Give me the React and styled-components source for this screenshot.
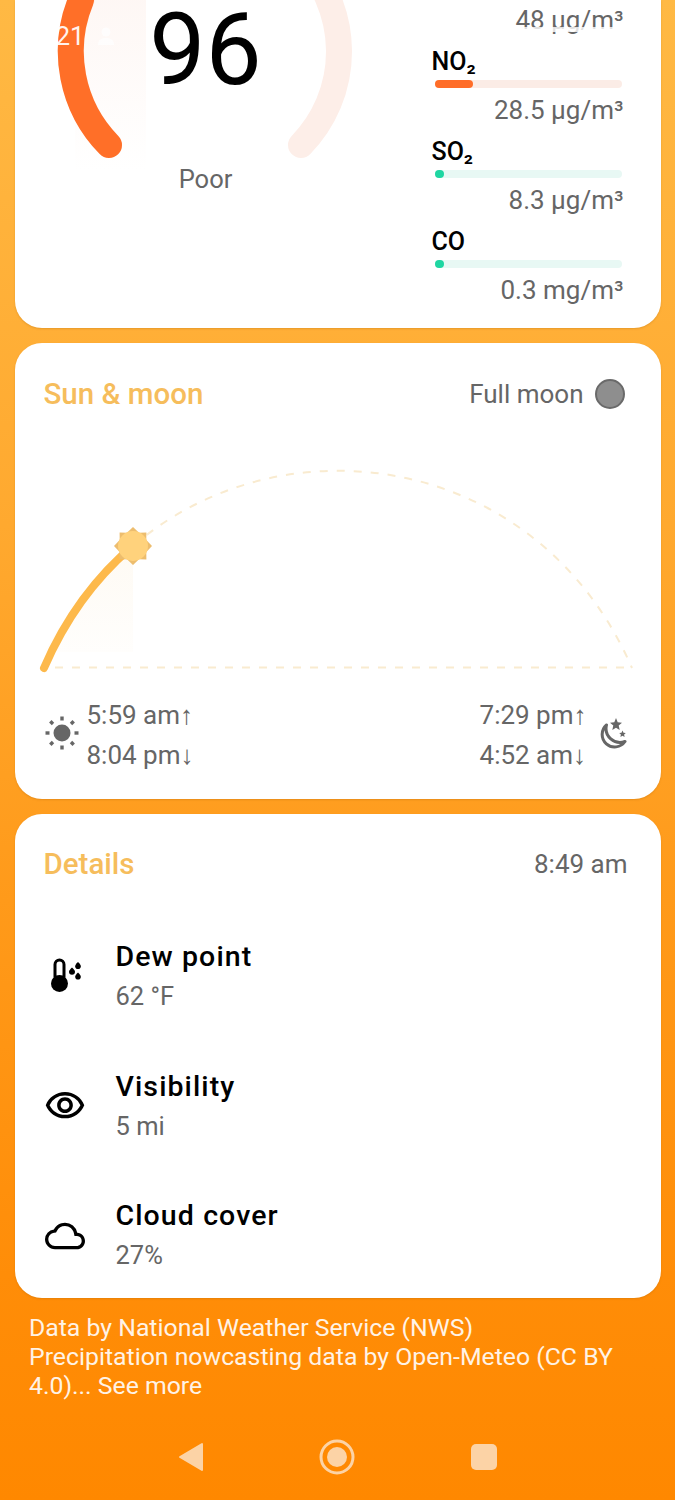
import React from 'react';
import styled, { createGlobalStyle } from 'styled-components';
import { MdOutlineVisibility, MdOutlineCloud } from 'react-icons/md';

const GlobalStyle = createGlobalStyle`
  html, body {
    margin: 0;
    padding: 0;
    background: #ff8800;
  }
  body {
    font-family: Roboto, "Liberation Sans", sans-serif;
  }
`;

const Screen = styled.div`
  position: relative;
  width: 675px;
  height: 1500px;
  overflow: hidden;
  box-sizing: border-box;
  padding: 0 14.5px;
  display: flex;
  flex-direction: column;
  gap: 15px;
  background: linear-gradient(180deg, #ffb944 0%, #ffa92f 35%, #ff9a1a 60%, #ff8d08 85%, #ff8800 100%);
`;

const Card = styled.section`
  background: #fff;
  width: 646px;
  box-sizing: border-box;
  border-radius: ${props => (props.$cropped ? '0 0 27px 27px' : '27px')};
  height: ${props => props.$height}px;
  flex: none;
  position: relative;
  box-shadow: 0 1px 2px rgba(160, 90, 0, 0.25);
`;

const AirCard = styled(Card)`
  display: flex;
  justify-content: space-between;
  overflow: hidden;
`;

const GaugeColumn = styled.div`
  position: relative;
  width: 382px;
  height: 200px;
`;

const GaugeValue = styled.div`
  position: absolute;
  top: 0;
  left: 0;
  width: 382px;
  text-align: center;
  font-size: 100px;
  line-height: 100px;
  color: #000;
`;

const GaugeCaption = styled.div`
  position: absolute;
  top: 164px;
  left: 0;
  width: 382px;
  text-align: center;
  font-size: 25.5px;
  line-height: 30px;
  color: #666;
`;

const StatusClock = styled.div`
  position: absolute;
  top: 21px;
  left: 41px;
  font-size: 26px;
  line-height: 30px;
  color: #fff;
  opacity: 0.92;
`;

const StatusIcon = styled.svg`
  position: absolute;
  top: 26px;
  left: 82px;
  opacity: 0.8;
`;

const StatusFade = styled.div`
  position: absolute;
  top: 27px;
  right: 30px;
  width: 118px;
  height: 5px;
  background: rgba(255, 255, 255, 0.8);
`;

const Pollutants = styled.div`
  box-sizing: border-box;
  width: 229px;
  padding: 6px 37px 0 0;
  flex: none;
`;

const Pollutant = styled.div`
  margin-bottom: 13px;
`;

const PollutantName = styled.div`
  font-size: 25px;
  line-height: 30px;
  font-weight: 500;
  color: #000;
`;

const Track = styled.div`
  height: 8px;
  margin: 3px 0 8px 3px;
  width: 187px;
  border-radius: 4px;
  background: ${props => props.$color};
`;

const Fill = styled.div`
  height: 8px;
  border-radius: 4px;
  background: ${props => props.$color};
`;

const PollutantValue = styled.div`
  font-size: 26px;
  line-height: 28px;
  color: #666;
  text-align: right;
  white-space: nowrap;
`;

const CardHeader = styled.header`
  display: flex;
  align-items: center;
  justify-content: space-between;
  padding: ${props => props.$pad};
  height: 32px;
`;

const CardTitle = styled.h2`
  margin: 0;
  font-size: 29.5px;
  line-height: 32px;
  font-weight: 500;
  color: #f6bd5c;
`;

const HeaderInfo = styled.div`
  display: flex;
  align-items: center;
  gap: 11px;
  font-size: 26px;
  line-height: 32px;
  color: #666;
`;

const MoonDisc = styled.span`
  box-sizing: border-box;
  width: 30px;
  height: 30px;
  border-radius: 50%;
  background: #8e8e8e;
  border: 2px solid #6a6a6a;
`;

const ArcChart = styled.svg`
  display: block;
  margin-top: 20px;
`;

const TimesRow = styled.div`
  display: flex;
  justify-content: space-between;
  padding: 5px 33px 0 29px;
`;

const TimeGroup = styled.div`
  display: flex;
  align-items: center;
  gap: ${props => props.$gap}px;
`;

const TimeIcon = styled.div`
  display: flex;
  margin-bottom: 4px;
`;

const TimeLines = styled.div`
  font-size: 26px;
  line-height: 40px;
  color: #666;
`;

const DetailList = styled.div`
  margin-top: 32px;
`;

const DetailRow = styled.div`
  display: flex;
  align-items: center;
  height: 129.5px;
  padding-left: 29px;
  box-sizing: border-box;
`;

const DetailIcon = styled.div`
  width: 42px;
  height: 42px;
  margin-right: 30px;
  display: flex;
  align-items: center;
  justify-content: center;
  color: #000;
  font-size: ${props => props.$size || 42}px;
`;

const DetailName = styled.div`
  font-size: 28.5px;
  line-height: 36px;
  font-weight: 500;
  letter-spacing: 1.1px;
  color: #000;
`;

const DetailValue = styled.div`
  font-size: 25.5px;
  line-height: 36px;
  margin-top: 3px;
  color: #666;
`;

const Credits = styled.p`
  margin: 0;
  padding: 0 14.5px;
  font-size: 24.8px;
  line-height: 29px;
  color: #fff;
  opacity: 0.9;
`;

const NavBar = styled.nav`
  position: absolute;
  left: 0;
  right: 0;
  bottom: 14px;
  height: 58px;
  display: flex;
  align-items: center;
  justify-content: center;
  gap: 115px;
`;

const POLLUTANTS = [
  { name: 'NO₂', value: '28.5 µg/m³', color: '#ff6d28', track: '#fbece6', width: 38 },
  { name: 'SO₂', value: '8.3 µg/m³', color: '#1fd6a2', track: '#e8f8f4', width: 9 },
  { name: 'CO', value: '0.3 mg/m³', color: '#1fd6a2', track: '#e8f8f4', width: 9 },
];

const Gauge = () => (
  <svg width="382" height="200" viewBox="0 0 382 200" style={{ position: 'absolute', top: 0, left: 0 }}>
    <defs>
      <linearGradient id="gaugeGlow" x1="0" y1="0" x2="0" y2="1">
        <stop offset="0" stopColor="#fdeee8" stopOpacity="0.45" />
        <stop offset="1" stopColor="#fdeee8" stopOpacity="0" />
      </linearGradient>
    </defs>
    <rect x="60" y="0" width="71" height="170" fill="url(#gaugeGlow)" />
    <path d="M94 145 A134 134 0 1 1 286 145" fill="none" stroke="#fdeee8" strokeWidth="26" strokeLinecap="round" />
    <path d="M94 145 A134 134 0 0 1 66 0" fill="none" stroke="#ff6f28" strokeWidth="26" strokeLinecap="round" />
  </svg>
);

const ArcGraph = () => (
  <ArcChart width="646" height="260" viewBox="0 0 646 260">
    <defs>
      <clipPath id="passed">
        <rect x="0" y="0" width="118" height="260" />
      </clipPath>
      <linearGradient id="arcGlow" x1="0" y1="0" x2="0" y2="1">
        <stop offset="0" stopColor="#fdf3e2" stopOpacity="0.4" />
        <stop offset="1" stopColor="#fdf3e2" stopOpacity="0.1" />
      </linearGradient>
    </defs>
    <path
      d="M29 238 C143 -25 503 -25 617 238"
      fill="none"
      stroke="#f9ebd0"
      strokeWidth="2"
      strokeDasharray="8 9"
    />
    <line x1="40" y1="237.5" x2="617" y2="237.5" stroke="#f9ebd0" strokeWidth="2" strokeDasharray="8 9" />
    <path d="M29 222 C60 170 85 140 118 116 L118 222 Z" fill="url(#arcGlow)" />
    <path
      d="M29 238 C143 -25 503 -25 617 238"
      fill="none"
      stroke="#fdb94b"
      strokeWidth="8"
      strokeLinecap="round"
      clipPath="url(#passed)"
    />
    <polygon
      points="118,97 124,102.7 131.4,102.6 131.3,110 137,116 131.3,122 131.4,129.4 124,129.3 118,135 112,129.3 104.6,129.4 104.7,122 99,116 104.7,110 104.6,102.6 112,102.7"
      fill="#edbd6e"
    />
    <circle cx="118" cy="116" r="15" fill="#ffd27c" />
  </ArcChart>
);

const SunIcon = () => (
  <svg width="36" height="36" viewBox="0 0 36 36">
    <circle cx="18" cy="18" r="8.5" fill="#666" />
    <g stroke="#666" strokeWidth="3.4">
      <line x1="18" y1="1.5" x2="18" y2="5.5" />
      <line x1="18" y1="30.5" x2="18" y2="34.5" />
      <line x1="1.5" y1="18" x2="5.5" y2="18" />
      <line x1="30.5" y1="18" x2="34.5" y2="18" />
      <line x1="6.3" y1="6.3" x2="9" y2="9" />
      <line x1="27" y1="27" x2="29.7" y2="29.7" />
      <line x1="6.3" y1="29.7" x2="9" y2="27" />
      <line x1="27" y1="9" x2="29.7" y2="6.3" />
    </g>
  </svg>
);

const MoonStarsIcon = () => (
  <svg width="32" height="32" viewBox="0 0 32 32">
    <path
      d="M10.500 8 A12.500 12.500 0 1 0 29 24.500 A14 14 0 0 1 10.500 8 Z"
      fill="none"
      stroke="#666"
      strokeWidth="3"
      strokeLinejoin="round"
    />
    <polygon points="20,1 21.700,5.300 26,5.700 22.700,8.600 23.700,13 20,10.700 16.300,13 17.300,8.600 14,5.700 18.300,5.300" fill="#666" />
    <polygon points="26.500,13.500 27.500,15.700 29.800,16 28.100,17.600 28.600,20 26.500,18.800 24.400,20 24.900,17.600 23.200,16 25.500,15.700" fill="#666" />
  </svg>
);

const DewIcon = () => (
  <svg width="42" height="42" viewBox="0 0 42 42">
    <path d="M11 21 V8.500 a4.500 4.500 0 0 1 9 0 V21" fill="none" stroke="#000" strokeWidth="3" />
    <circle cx="15.500" cy="27.500" r="8.500" fill="#000" />
    <path d="M28 11.500 c2 2 3 3 3 4.300 a3 3 0 0 1 -6 0 c0 -1.300 1 -2.300 3 -4.300 Z" fill="#000" />
    <path d="M34 6 c2 2 2.800 3 2.800 4.200 a2.800 2.800 0 0 1 -5.600 0 c0 -1.200 .8 -2.200 2.800 -4.200 Z" fill="#000" />
    <path d="M34 16.500 c2 2 2.800 3 2.800 4.200 a2.800 2.800 0 0 1 -5.600 0 c0 -1.200 .8 -2.200 2.800 -4.200 Z" fill="#000" />
  </svg>
);

const App = () => (
  <Screen>
    <GlobalStyle />
    <AirCard $cropped $height={328}>
      <GaugeColumn>
        <Gauge />
        <GaugeValue>96</GaugeValue>
        <GaugeCaption>Poor</GaugeCaption>
        <StatusClock>21</StatusClock>
        <StatusIcon width="18" height="20" viewBox="0 0 18 20">
          <circle cx="9" cy="6" r="4.500" fill="#fff" />
          <path d="M1 19 c0 -5 3 -7 8 -7 s8 2 8 7 Z" fill="#fff" />
        </StatusIcon>
      </GaugeColumn>
      <Pollutants>
        <Pollutant>
          <PollutantValue>48 µg/m³</PollutantValue>
        </Pollutant>
        {POLLUTANTS.map(item => (
          <Pollutant key={item.name}>
            <PollutantName>{item.name}</PollutantName>
            <Track $color={item.track}>
              <Fill $color={item.color} style={{ width: item.width }} />
            </Track>
            <PollutantValue>{item.value}</PollutantValue>
          </Pollutant>
        ))}
      </Pollutants>
      <StatusFade />
    </AirCard>

    <Card $height={456}>
      <CardHeader $pad="35px 36px 0 29px">
        <CardTitle>Sun &amp; moon</CardTitle>
        <HeaderInfo>
          Full moon
          <MoonDisc />
        </HeaderInfo>
      </CardHeader>
      <ArcGraph />
      <TimesRow>
        <TimeGroup $gap={7}>
          <TimeIcon>
            <SunIcon />
          </TimeIcon>
          <TimeLines>
            5:59 am↑
            <br />
            8:04 pm↓
          </TimeLines>
        </TimeGroup>
        <TimeGroup $gap={9}>
          <TimeLines>
            7:29 pm↑
            <br />
            4:52 am↓
          </TimeLines>
          <TimeIcon>
            <MoonStarsIcon />
          </TimeIcon>
        </TimeGroup>
      </TimesRow>
    </Card>

    <Card $height={484}>
      <CardHeader $pad="34px 33px 0 29px">
        <CardTitle>Details</CardTitle>
        <HeaderInfo>8:49 am</HeaderInfo>
      </CardHeader>
      <DetailList>
        <DetailRow>
          <DetailIcon>
            <DewIcon />
          </DetailIcon>
          <div>
            <DetailName>Dew point</DetailName>
            <DetailValue>62 °F</DetailValue>
          </div>
        </DetailRow>
        <DetailRow>
          <DetailIcon>
            <MdOutlineVisibility />
          </DetailIcon>
          <div>
            <DetailName>Visibility</DetailName>
            <DetailValue>5 mi</DetailValue>
          </div>
        </DetailRow>
        <DetailRow>
          <DetailIcon $size={40}>
            <MdOutlineCloud />
          </DetailIcon>
          <div>
            <DetailName>Cloud cover</DetailName>
            <DetailValue>27%</DetailValue>
          </div>
        </DetailRow>
      </DetailList>
    </Card>

    <Credits>
      Data by National Weather Service (NWS)
      <br />
      Precipitation nowcasting data by Open-Meteo (CC BY 4.0)... See more
    </Credits>

    <NavBar>
      <svg width="26" height="30" viewBox="0 0 26 30">
        <path d="M24 2 L24 28 L2 15 Z" fill="#fcd3a6" stroke="#fcd3a6" strokeWidth="2" strokeLinejoin="round" />
      </svg>
      <svg width="36" height="36" viewBox="0 0 36 36">
        <circle cx="18" cy="18" r="16" fill="none" stroke="#fcd3a6" strokeWidth="3" />
        <circle cx="18" cy="18" r="10" fill="#fcd3a6" />
      </svg>
      <svg width="28" height="28" viewBox="0 0 28 28">
        <rect x="1" y="1" width="26" height="26" rx="5" fill="#fcd3a6" />
      </svg>
    </NavBar>
  </Screen>
);

export default App;
